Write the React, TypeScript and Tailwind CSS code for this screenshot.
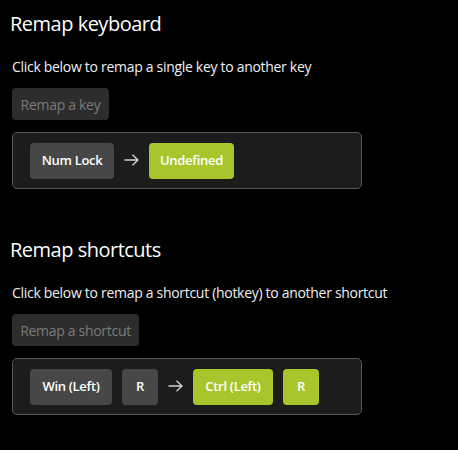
import React from 'react';

type KeyProps = { label: string; width: string; accent?: boolean };

const Key: React.FC<KeyProps> = ({ label, width, accent }) => (
  <div
    className={`${width} h-9 rounded-[4px] flex items-center justify-center text-[13px] font-semibold tracking-[-0.3px] ${
      accent ? 'bg-[#a8c62b] text-white' : 'bg-[#474747] text-white'
    }`}
  >
    {label}
  </div>
);

const Arrow: React.FC = () => (
  <svg width="15" height="12" viewBox="0 0 15 12" fill="none" className="-mt-[2px]">
    <path d="M0.5 6H14M8.5 0.8L14 6L8.5 11.2" stroke="#d4d4d4" strokeWidth="1.3" />
  </svg>
);

type SectionProps = {
  title: string;
  desc: string;
  button: string;
  buttonWidth: string;
  left: KeyProps[];
  right: KeyProps[];
};

const Section: React.FC<SectionProps> = ({ title, desc, button, buttonWidth, left, right }) => (
  <section>
    <h2 className="text-[20px] leading-[28px] text-white pl-[10px] tracking-[-0.5px]">{title}</h2>
    <p className="mt-[19px] text-[14px] leading-[20px] text-[#f0f0f0] pl-3 tracking-[-0.3px]">{desc}</p>
    <div className="pl-3 mt-[11px]">
      <button className={`${buttonWidth} h-8 rounded-[4px] bg-[#2d2d2d] text-[#7b7b7b] text-[14px] tracking-[-0.3px] text-center`}>
        {button}
      </button>
    </div>
    <div className="ml-3 mt-3 w-[350px] h-[57px] rounded-[5px] border border-[#585858] bg-[#1c1c1c] flex items-center pl-[17px] gap-[10px]">
      <div className="flex gap-[10px]">
        {left.map((k) => (
          <Key key={k.label} {...k} />
        ))}
      </div>
      <Arrow />
      <div className="flex gap-[10px]">
        {right.map((k) => (
          <Key key={k.label} {...k} />
        ))}
      </div>
    </div>
  </section>
);

const App: React.FC = () => {
  return (
    <div className="w-[458px] h-[450px] bg-black font-['Open_Sans',sans-serif] pt-[10px] overflow-hidden">
      <Section
        title="Remap keyboard"
        desc="Click below to remap a single key to another key"
        button="Remap a key"
        buttonWidth="w-[97px]"
        left={[{ label: 'Num Lock', width: 'w-[84px]' }]}
        right={[{ label: 'Undefined', width: 'w-[85px]', accent: true }]}
      />
      <div className="h-[47px]" />
      <Section
        title="Remap shortcuts"
        desc="Click below to remap a shortcut (hotkey) to another shortcut"
        button="Remap a shortcut"
        buttonWidth="w-[127px]"
        left={[
          { label: 'Win (Left)', width: 'w-[82px]' },
          { label: 'R', width: 'w-9' },
        ]}
        right={[
          { label: 'Ctrl (Left)', width: 'w-[80px]', accent: true },
          { label: 'R', width: 'w-9', accent: true },
        ]}
      />
    </div>
  );
};

export default App;
